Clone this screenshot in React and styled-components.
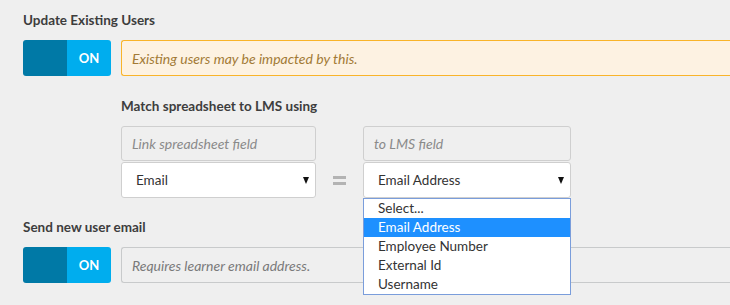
import React from "react";
import styled, { createGlobalStyle } from "styled-components";

const GlobalStyle = createGlobalStyle`
  html, body {
    margin: 0;
    padding: 0;
    height: 100%;
    background: #efefef;
    overflow: hidden;
  }
  body {
    font-family: "Lato", "Open Sans", sans-serif;
    color: #3b3b3b;
  }
`;

const fieldOptions = [
  "Select...",
  "Email Address",
  "Employee Number",
  "External Id",
  "Username",
];

export default function App() {
  return (
    <>
      <GlobalStyle />
      <Page>
        <Section>
          <Label>Update Existing Users</Label>
          <Row>
            <Toggle>
              <ToggleKnob />
              <ToggleState>ON</ToggleState>
            </Toggle>
            <Notice tone="warning">Existing users may be impacted by this.</Notice>
          </Row>
        </Section>

        <MatchSection>
          <Label>Match spreadsheet to LMS using</Label>
          <MatchGrid>
            <FieldGroup width={195}>
              <FieldHeader>Link spreadsheet field</FieldHeader>
              <Select>
                Email
                <Caret />
              </Select>
            </FieldGroup>
            <Equals />
            <FieldGroup width={208}>
              <FieldHeader>to LMS field</FieldHeader>
              <Select>
                Email Address
                <Caret />
              </Select>
              <OptionList>
                {fieldOptions.map((option) => (
                  <Option key={option} selected={option === "Email Address"}>
                    {option}
                  </Option>
                ))}
              </OptionList>
            </FieldGroup>
          </MatchGrid>
        </MatchSection>

        <Section>
          <Label>Send new user email</Label>
          <Row>
            <Toggle>
              <ToggleKnob />
              <ToggleState>ON</ToggleState>
            </Toggle>
            <Notice>Requires learner email address.</Notice>
          </Row>
        </Section>
      </Page>
    </>
  );
}

const Page = styled.div`
  padding: 11px 0 0 23px;
`;

const Section = styled.div`
  display: flex;
  flex-direction: column;
`;

const Label = styled.div`
  font-size: 13.5px;
  font-weight: 700;
  line-height: 18px;
  color: #3d3d3d;
  margin-bottom: 11px;
`;

const Row = styled.div`
  display: flex;
  gap: 10px;
`;

const Toggle = styled.div`
  display: flex;
  width: 88px;
  height: 36px;
  border-radius: 3px;
  overflow: hidden;
  flex-shrink: 0;
`;

const ToggleKnob = styled.div`
  flex: 1;
  background: #0079a6;
`;

const ToggleState = styled.div`
  flex: 1;
  background: #00adee;
  color: #fff;
  font-weight: 700;
  font-size: 13px;
  display: flex;
  align-items: center;
  justify-content: center;
`;

/* the notice runs on past the right edge of the window */
const Notice = styled.div`
  flex: 1;
  height: 36px;
  box-sizing: border-box;
  display: flex;
  align-items: center;
  padding-left: 10px;
  font-style: italic;
  font-size: 14px;
  border-radius: 3px 0 0 3px;
  border: 1px solid ${(p) => (p.tone === "warning" ? "#f9b42a" : "#c8cacb")};
  border-right: none;
  background: ${(p) => (p.tone === "warning" ? "#fdf2e2" : "#efefef")};
  color: ${(p) => (p.tone === "warning" ? "#a27a36" : "#7a7a7a")};
`;

const MatchSection = styled.div`
  margin: 21px 0 20px 98px;
  display: flex;
  flex-direction: column;
`;

const MatchGrid = styled.div`
  display: flex;
  align-items: flex-start;
  gap: 17px;
`;

const FieldGroup = styled.div`
  position: relative;
  width: ${(p) => p.width}px;
  display: flex;
  flex-direction: column;
  gap: 1px;
`;

const FieldHeader = styled.div`
  height: 35px;
  box-sizing: border-box;
  border: 1px solid #cfcfcf;
  border-radius: 3px;
  background: #efefef;
  color: #8a8a8a;
  font-style: italic;
  font-size: 14px;
  display: flex;
  align-items: center;
  padding-left: 10px;
`;

const Select = styled.div`
  height: 36px;
  box-sizing: border-box;
  border: 1px solid #cfcfcf;
  border-radius: 3px;
  background: #fff;
  color: #333;
  font-size: 13.5px;
  display: flex;
  align-items: center;
  justify-content: space-between;
  padding: 0 6px 0 14px;
`;

const Caret = styled.span`
  width: 0;
  height: 0;
  border-left: 3.5px solid transparent;
  border-right: 3.5px solid transparent;
  border-top: 7px solid #111;
`;

const Equals = styled.div`
  width: 13px;
  height: 9px;
  margin-top: 50px;
  box-sizing: border-box;
  border-top: 3px solid #b3b3b3;
  border-bottom: 3px solid #b3b3b3;
`;

const OptionList = styled.ul`
  position: absolute;
  top: 72px;
  left: 0;
  right: 0;
  margin: 0;
  padding: 0;
  list-style: none;
  background: #fff;
  border: 1px solid #7a9ddb;
  z-index: 2;
`;

const Option = styled.li`
  height: 19px;
  line-height: 19px;
  padding-left: 14px;
  font-size: 13.5px;
  color: ${(p) => (p.selected ? "#fff" : "#333")};
  background: ${(p) => (p.selected ? "#1e90ff" : "transparent")};
`;
